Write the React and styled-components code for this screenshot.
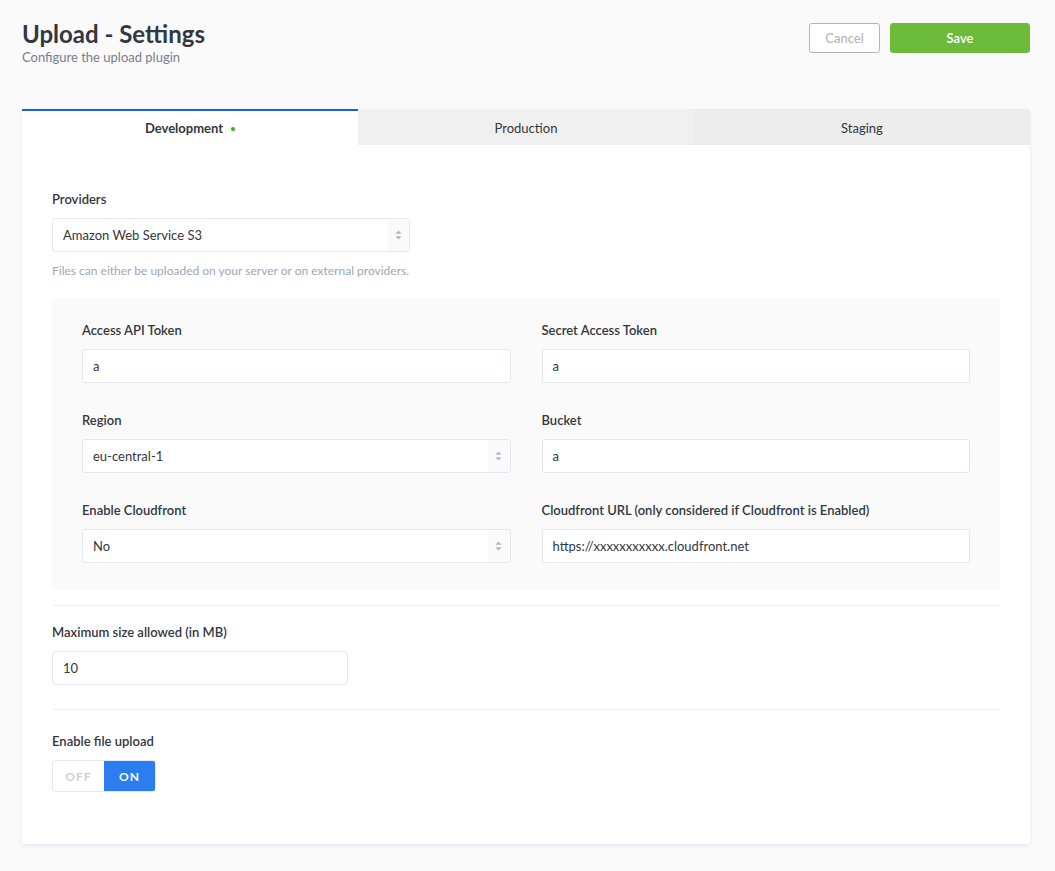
import React from "react";
import styled, { createGlobalStyle } from "styled-components";

const GlobalStyle = createGlobalStyle`
  html, body { margin: 0; padding: 0; background: #fafafb; }
  body { font-family: Lato, "Open Sans", "Liberation Sans", sans-serif; color: #333740; -webkit-font-smoothing: antialiased; }
  * { box-sizing: border-box; }
`;

const Page = styled.div`
  padding: 19px 25px 28px 22px;
`;

const Header = styled.header`
  display: flex;
  justify-content: space-between;
  align-items: flex-start;
`;

const TitleBlock = styled.div`
  display: flex;
  flex-direction: column;
`;

const Title = styled.h1`
  margin: 0;
  font-size: 24px;
  line-height: 30px;
  font-weight: 700;
  color: #333740;
`;

const Subtitle = styled.p`
  margin: 0;
  font-size: 13px;
  line-height: 16px;
  color: #787e8f;
`;

const Actions = styled.div`
  display: flex;
  gap: 10px;
  margin-top: 4px;
`;

const Button = styled.button`
  height: 30px;
  border-radius: 3px;
  font-family: inherit;
  font-size: 13px;
  font-weight: ${(p) => (p.$primary ? 600 : 500)};
  padding: 0;
  width: ${(p) => p.$width}px;
  cursor: pointer;
  border: 1px solid ${(p) => (p.$primary ? "#6dbb3a" : "#b3b5b9")};
  background: ${(p) => (p.$primary ? "#6dbb3a" : "#ffffff")};
  color: ${(p) => (p.$primary ? "#ffffff" : "#b3b5b9")};
`;

const Card = styled.section`
  margin-top: 44px;
  background: #ffffff;
  border-radius: 2px;
  box-shadow: 0 2px 4px #e3e9f3;
`;

const Tabs = styled.nav`
  display: grid;
  grid-template-columns: repeat(3, 1fr);
`;

const Tab = styled.div`
  height: 36px;
  display: flex;
  align-items: center;
  justify-content: center;
  gap: 8px;
  font-size: 13px;
  font-weight: ${(p) => (p.$active ? 700 : 400)};
  color: #333740;
  background: ${(p) => (p.$active ? "#ffffff" : p.$bg)};
  border-top: 2px solid ${(p) => (p.$active ? "#1c5de7" : "transparent")};
  border-top-right-radius: ${(p) => (p.$last ? "2px" : "0")};
`;

const Dot = styled.span`
  width: 4px;
  height: 4px;
  border-radius: 50%;
  background: #27b70a;
  margin-top: 1px;
`;

const Body = styled.div`
  padding: 45px 30px 52px;
`;

const Field = styled.div`
  display: flex;
  flex-direction: column;
`;

const Label = styled.label`
  font-size: 13px;
  line-height: 18px;
  font-weight: 600;
  color: #333740;
  margin-bottom: 10px;
`;

const InputBox = styled.div`
  position: relative;
  height: 34px;
  width: ${(p) => (p.$width ? `${p.$width}px` : "100%")};
  border: 1px solid #e3e9f3;
  border-radius: 3px;
  background: #ffffff;
  display: flex;
  align-items: center;
  padding-left: 10px;
  font-size: 13px;
  color: #333740;
  overflow: hidden;
`;

const ArrowZone = styled.span`
  position: absolute;
  right: 0;
  top: 0;
  bottom: 0;
  width: 22px;
  background: #fafafb;
  display: flex;
  align-items: center;
  justify-content: center;
`;

const Hint = styled.p`
  margin: 10px 0 0;
  font-size: 12px;
  line-height: 18px;
  color: #9ea7b8;
`;

const ProviderBox = styled.div`
  margin-top: 18px;
  background: #fafafb;
  padding: 23px 30px 27px;
  display: grid;
  grid-template-columns: 1fr 1fr;
  column-gap: 31px;
  row-gap: 28px;
`;

const Divider = styled.hr`
  border: 0;
  height: 1px;
  background: #f0f1f4;
  margin: ${(p) => p.$margin};
`;

const Toggle = styled.div`
  display: flex;
  width: 104px;
  height: 32px;
  border: 1px solid #e3e9f3;
  border-radius: 3px;
  overflow: hidden;
`;

const ToggleOption = styled.span`
  flex: 1;
  display: flex;
  align-items: center;
  justify-content: center;
  font-size: 12px;
  font-weight: 700;
  letter-spacing: 1px;
  background: ${(p) => (p.$on ? "#2c7ef0" : "#ffffff")};
  color: ${(p) => (p.$on ? "#ffffff" : "#cdd0d6")};
`;

const SelectArrows = () => (
  <svg width="7" height="10" viewBox="0 0 7 10" aria-hidden="true">
    <path d="M3.5 0.5 L6.5 3.8 L0.5 3.8 Z" fill="#b3b5b9" />
    <path d="M3.5 9.5 L6.5 6.2 L0.5 6.2 Z" fill="#b3b5b9" />
  </svg>
);

const Input = ({ value, select, width }) => (
  <InputBox $width={width}>
    {value}
    {select && (
      <ArrowZone>
        <SelectArrows />
      </ArrowZone>
    )}
  </InputBox>
);

const providerFields = [
  { label: "Access API Token", value: "a" },
  { label: "Secret Access Token", value: "a" },
  { label: "Region", value: "eu-central-1", select: true },
  { label: "Bucket", value: "a" },
  { label: "Enable Cloudfront", value: "No", select: true },
  { label: "Cloudfront URL (only considered if Cloudfront is Enabled)", value: "https://xxxxxxxxxxx.cloudfront.net" },
];

export default function App() {
  return (
    <>
      <GlobalStyle />
      <Page>
        <Header>
          <TitleBlock>
            <Title>Upload - Settings</Title>
            <Subtitle>Configure the upload plugin</Subtitle>
          </TitleBlock>
          <Actions>
            <Button $width={71}>Cancel</Button>
            <Button $primary $width={140}>Save</Button>
          </Actions>
        </Header>
        <Card>
          <Tabs>
            <Tab $active>
              Development <Dot />
            </Tab>
            <Tab $bg="#f0f0f0">Production</Tab>
            <Tab $bg="#ececec" $last>Staging</Tab>
          </Tabs>
          <Body>
            <Field>
              <Label>Providers</Label>
              <Input value="Amazon Web Service S3" select width={358} />
            </Field>
            <Hint>Files can either be uploaded on your server or on external providers.</Hint>
            <ProviderBox>
              {providerFields.map((f) => (
                <Field key={f.label}>
                  <Label>{f.label}</Label>
                  <Input value={f.value} select={f.select} />
                </Field>
              ))}
            </ProviderBox>
            <Divider $margin="15px 0 17px" />
            <Field>
              <Label>Maximum size allowed (in MB)</Label>
              <Input value="10" width={296} />
            </Field>
            <Divider $margin="24px 0 22px" />
            <Field>
              <Label>Enable file upload</Label>
              <Toggle>
                <ToggleOption>OFF</ToggleOption>
                <ToggleOption $on>ON</ToggleOption>
              </Toggle>
            </Field>
          </Body>
        </Card>
      </Page>
    </>
  );
}
